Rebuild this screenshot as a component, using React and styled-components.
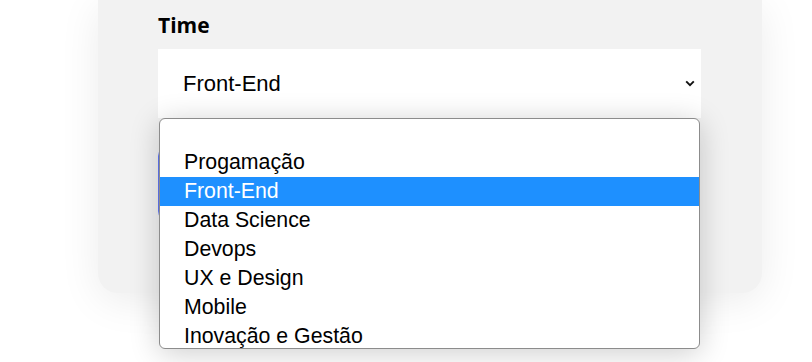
import React from "react";
import styled, { createGlobalStyle } from "styled-components";

const times = [
  "",
  "Progamação",
  "Front-End",
  "Data Science",
  "Devops",
  "UX e Design",
  "Mobile",
  "Inovação e Gestão",
];

const App = () => {
  const selected = "Front-End";
  return (
    <React.Fragment>
      <GlobalStyle />
      <Page>
        <Card>
          <Label>Time</Label>
          <Field>
            <SelectBox>
              <span>{selected}</span>
              <svg width="10" height="7" viewBox="0 0 10 7">
                <path
                  d="M1.2 1.4 L5 5.2 L8.8 1.4"
                  fill="none"
                  stroke="#111"
                  strokeWidth="1.9"
                />
              </svg>
            </SelectBox>
            <OptionList>
              {times.map((time) => (
                <Option key={time || "empty"} $active={time === selected}>
                  {time}
                </Option>
              ))}
            </OptionList>
          </Field>
          <Button />
        </Card>
      </Page>
    </React.Fragment>
  );
};

// Styled components
const GlobalStyle = createGlobalStyle`
  body {
    margin: 0;
    background: #ffffff;
    font-family: "Open Sans", sans-serif;
    overflow: hidden;
  }
`;

const Page = styled.div`
  width: 812px;
  height: 362px;
  padding-left: 98px;
  box-sizing: border-box;
`;

const Card = styled.div`
  width: 664px;
  box-sizing: border-box;
  padding: 12px 61px 72px 60px;
  background: #f2f2f2;
  border-radius: 0 0 20px 20px;
  box-shadow: 0 8px 40px rgba(0, 0, 0, 0.08);
  display: flex;
  flex-direction: column;
`;

const Label = styled.label`
  font-family: "Open Sans", sans-serif;
  font-weight: 700;
  font-size: 21px;
  line-height: 27px;
  color: #000;
  margin-bottom: 10px;
`;

const Field = styled.div`
  position: relative;
`;

const SelectBox = styled.div`
  height: 69px;
  background: #ffffff;
  display: flex;
  align-items: center;
  justify-content: space-between;
  padding: 0 6px 0 25px;
  font-family: "Liberation Sans", Arial, sans-serif;
  font-size: 22px;
  color: #000;
`;

const OptionList = styled.ul`
  position: absolute;
  top: 69px;
  left: 1px;
  width: 541px;
  height: 231px;
  box-sizing: border-box;
  margin: 0;
  padding: 0;
  list-style: none;
  background: #ffffff;
  border: 1px solid #8c8c8c;
  border-radius: 6px;
  overflow: hidden;
  box-shadow: 0 4px 30px rgba(0, 0, 0, 0.2);
  z-index: 2;
`;

const Option = styled.li`
  height: 29px;
  line-height: 29px;
  padding-left: 24px;
  font-family: "Liberation Sans", Arial, sans-serif;
  font-size: 21.3px;
  white-space: nowrap;
  color: ${(props) => (props.$active ? "#ffffff" : "#000000")};
  background: ${(props) => (props.$active ? "#1e90ff" : "transparent")};
`;

const Button = styled.button`
  margin-top: 28px;
  width: 220px;
  height: 75px;
  border: none;
  border-radius: 10px;
  background: #6278f7;
`;

export default App;
